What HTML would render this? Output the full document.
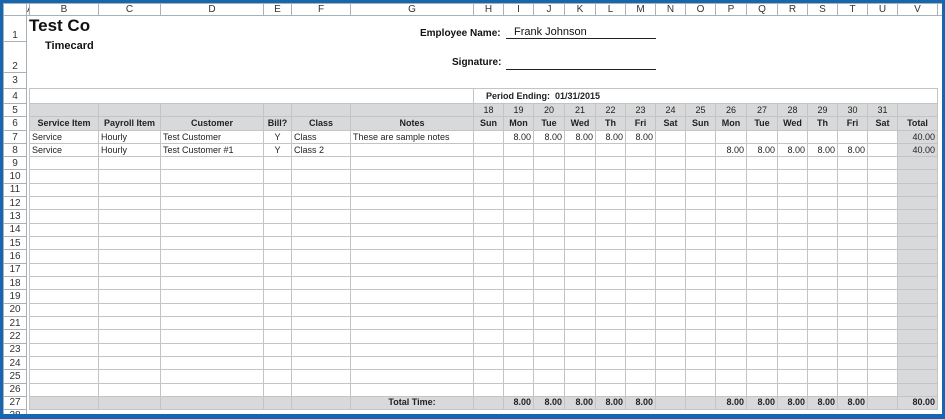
<!DOCTYPE html>
<html><head><style>
html,body{margin:0;padding:0;width:945px;height:419px;overflow:hidden;background:#1767b0;}
#wrap{position:absolute;left:3px;top:3px;width:939px;height:411px;background:#fff;overflow:hidden;}
table{border-collapse:collapse;table-layout:fixed;position:absolute;left:0;top:0;width:939px;}
td,th{padding:0 2px;font-family:"Liberation Sans",sans-serif;font-size:9px;white-space:nowrap;overflow:hidden;color:#222;line-height:11px;}
td{border:1px solid #c4c4c4;}
th{border:1px solid #a8b0b8;background:#fff;font-weight:normal;font-size:10px;color:#333;text-align:center;padding:0;}
tr.top td{border:none;}
.g{background:#d8d9db;}
.b{font-weight:bold;text-align:center;}
.r{text-align:right;}
.c{text-align:center;}
.v{background:#d8d9db;text-align:right;}
.f{border:none;background:#fff;padding:0;}
.ov{position:absolute;font-family:"Liberation Sans",sans-serif;color:#111;white-space:nowrap;}
</style></head><body><div id="wrap">
<table>
<colgroup><col style="width:23px"><col style="width:3px"><col style="width:69px"><col style="width:62px"><col style="width:103px"><col style="width:28px"><col style="width:59px"><col style="width:123px"><col style="width:30px"><col style="width:30px"><col style="width:31px"><col style="width:31px"><col style="width:30px"><col style="width:30px"><col style="width:30px"><col style="width:30px"><col style="width:31px"><col style="width:31px"><col style="width:30px"><col style="width:30px"><col style="width:30px"><col style="width:30px"><col style="width:40px"><col style="width:5px"></colgroup>
<tr style="height:12px"><th></th><th>A</th><th>B</th><th>C</th><th>D</th><th>E</th><th>F</th><th>G</th><th>H</th><th>I</th><th>J</th><th>K</th><th>L</th><th>M</th><th>N</th><th>O</th><th>P</th><th>Q</th><th>R</th><th>S</th><th>T</th><th>U</th><th>V</th><th></th></tr>
<tr class="top" style="height:26px"><th style="vertical-align:bottom">1</th><td colspan="23"></td></tr>
<tr class="top" style="height:31px"><th style="vertical-align:bottom">2</th><td colspan="23"></td></tr>
<tr class="top" style="height:16px"><th>3</th><td colspan="23"></td></tr>
<tr style="height:15px"><th>4</th><td class="f"></td><td colspan="6"></td><td colspan="15" style="font-weight:bold;padding-left:12px">Period Ending:&nbsp; 01/31/2015</td><td class="f"></td></tr>
<tr style="height:13px"><th>5</th><td class="f"></td><td class="g"></td><td class="g"></td><td class="g"></td><td class="g"></td><td class="g"></td><td class="g"></td><td class="g c">18</td><td class="g c">19</td><td class="g c">20</td><td class="g c">21</td><td class="g c">22</td><td class="g c">23</td><td class="g c">24</td><td class="g c">25</td><td class="g c">26</td><td class="g c">27</td><td class="g c">28</td><td class="g c">29</td><td class="g c">30</td><td class="g c">31</td><td class="g"></td><td class="f"></td></tr>
<tr style="height:14px"><th>6</th><td class="f"></td><td class="g b">Service Item</td><td class="g b">Payroll Item</td><td class="g b">Customer</td><td class="g b">Bill?</td><td class="g b">Class</td><td class="g b">Notes</td><td class="g b">Sun</td><td class="g b">Mon</td><td class="g b">Tue</td><td class="g b">Wed</td><td class="g b">Th</td><td class="g b">Fri</td><td class="g b">Sat</td><td class="g b">Sun</td><td class="g b">Mon</td><td class="g b">Tue</td><td class="g b">Wed</td><td class="g b">Th</td><td class="g b">Fri</td><td class="g b">Sat</td><td class="g b">Total</td><td class="f"></td></tr>
<tr style="height:13px"><th>7</th><td class="f"></td><td>Service</td><td>Hourly</td><td>Test Customer</td><td class="c">Y</td><td>Class</td><td>These are sample notes</td><td></td><td class="r">8.00</td><td class="r">8.00</td><td class="r">8.00</td><td class="r">8.00</td><td class="r">8.00</td><td></td><td></td><td></td><td></td><td></td><td></td><td></td><td></td><td class="v">40.00</td><td class="f"></td></tr>
<tr style="height:13px"><th>8</th><td class="f"></td><td>Service</td><td>Hourly</td><td>Test Customer #1</td><td class="c">Y</td><td>Class 2</td><td></td><td></td><td></td><td></td><td></td><td></td><td></td><td></td><td></td><td class="r">8.00</td><td class="r">8.00</td><td class="r">8.00</td><td class="r">8.00</td><td class="r">8.00</td><td></td><td class="v">40.00</td><td class="f"></td></tr>
<tr style="height:13.33px"><th>9</th><td class="f"></td><td></td><td></td><td></td><td></td><td></td><td></td><td></td><td></td><td></td><td></td><td></td><td></td><td></td><td></td><td></td><td></td><td></td><td></td><td></td><td></td><td class="v"></td><td class="f"></td></tr>
<tr style="height:13.33px"><th>10</th><td class="f"></td><td></td><td></td><td></td><td></td><td></td><td></td><td></td><td></td><td></td><td></td><td></td><td></td><td></td><td></td><td></td><td></td><td></td><td></td><td></td><td></td><td class="v"></td><td class="f"></td></tr>
<tr style="height:13.33px"><th>11</th><td class="f"></td><td></td><td></td><td></td><td></td><td></td><td></td><td></td><td></td><td></td><td></td><td></td><td></td><td></td><td></td><td></td><td></td><td></td><td></td><td></td><td></td><td class="v"></td><td class="f"></td></tr>
<tr style="height:13.33px"><th>12</th><td class="f"></td><td></td><td></td><td></td><td></td><td></td><td></td><td></td><td></td><td></td><td></td><td></td><td></td><td></td><td></td><td></td><td></td><td></td><td></td><td></td><td></td><td class="v"></td><td class="f"></td></tr>
<tr style="height:13.33px"><th>13</th><td class="f"></td><td></td><td></td><td></td><td></td><td></td><td></td><td></td><td></td><td></td><td></td><td></td><td></td><td></td><td></td><td></td><td></td><td></td><td></td><td></td><td></td><td class="v"></td><td class="f"></td></tr>
<tr style="height:13.33px"><th>14</th><td class="f"></td><td></td><td></td><td></td><td></td><td></td><td></td><td></td><td></td><td></td><td></td><td></td><td></td><td></td><td></td><td></td><td></td><td></td><td></td><td></td><td></td><td class="v"></td><td class="f"></td></tr>
<tr style="height:13.33px"><th>15</th><td class="f"></td><td></td><td></td><td></td><td></td><td></td><td></td><td></td><td></td><td></td><td></td><td></td><td></td><td></td><td></td><td></td><td></td><td></td><td></td><td></td><td></td><td class="v"></td><td class="f"></td></tr>
<tr style="height:13.33px"><th>16</th><td class="f"></td><td></td><td></td><td></td><td></td><td></td><td></td><td></td><td></td><td></td><td></td><td></td><td></td><td></td><td></td><td></td><td></td><td></td><td></td><td></td><td></td><td class="v"></td><td class="f"></td></tr>
<tr style="height:13.33px"><th>17</th><td class="f"></td><td></td><td></td><td></td><td></td><td></td><td></td><td></td><td></td><td></td><td></td><td></td><td></td><td></td><td></td><td></td><td></td><td></td><td></td><td></td><td></td><td class="v"></td><td class="f"></td></tr>
<tr style="height:13.33px"><th>18</th><td class="f"></td><td></td><td></td><td></td><td></td><td></td><td></td><td></td><td></td><td></td><td></td><td></td><td></td><td></td><td></td><td></td><td></td><td></td><td></td><td></td><td></td><td class="v"></td><td class="f"></td></tr>
<tr style="height:13.33px"><th>19</th><td class="f"></td><td></td><td></td><td></td><td></td><td></td><td></td><td></td><td></td><td></td><td></td><td></td><td></td><td></td><td></td><td></td><td></td><td></td><td></td><td></td><td></td><td class="v"></td><td class="f"></td></tr>
<tr style="height:13.33px"><th>20</th><td class="f"></td><td></td><td></td><td></td><td></td><td></td><td></td><td></td><td></td><td></td><td></td><td></td><td></td><td></td><td></td><td></td><td></td><td></td><td></td><td></td><td></td><td class="v"></td><td class="f"></td></tr>
<tr style="height:13.33px"><th>21</th><td class="f"></td><td></td><td></td><td></td><td></td><td></td><td></td><td></td><td></td><td></td><td></td><td></td><td></td><td></td><td></td><td></td><td></td><td></td><td></td><td></td><td></td><td class="v"></td><td class="f"></td></tr>
<tr style="height:13.33px"><th>22</th><td class="f"></td><td></td><td></td><td></td><td></td><td></td><td></td><td></td><td></td><td></td><td></td><td></td><td></td><td></td><td></td><td></td><td></td><td></td><td></td><td></td><td></td><td class="v"></td><td class="f"></td></tr>
<tr style="height:13.33px"><th>23</th><td class="f"></td><td></td><td></td><td></td><td></td><td></td><td></td><td></td><td></td><td></td><td></td><td></td><td></td><td></td><td></td><td></td><td></td><td></td><td></td><td></td><td></td><td class="v"></td><td class="f"></td></tr>
<tr style="height:13.33px"><th>24</th><td class="f"></td><td></td><td></td><td></td><td></td><td></td><td></td><td></td><td></td><td></td><td></td><td></td><td></td><td></td><td></td><td></td><td></td><td></td><td></td><td></td><td></td><td class="v"></td><td class="f"></td></tr>
<tr style="height:13.33px"><th>25</th><td class="f"></td><td></td><td></td><td></td><td></td><td></td><td></td><td></td><td></td><td></td><td></td><td></td><td></td><td></td><td></td><td></td><td></td><td></td><td></td><td></td><td></td><td class="v"></td><td class="f"></td></tr>
<tr style="height:13.33px"><th>26</th><td class="f"></td><td></td><td></td><td></td><td></td><td></td><td></td><td></td><td></td><td></td><td></td><td></td><td></td><td></td><td></td><td></td><td></td><td></td><td></td><td></td><td></td><td class="v"></td><td class="f"></td></tr>
<tr style="height:13px"><th>27</th><td class="f"></td><td class="g"></td><td class="g"></td><td class="g"></td><td class="g"></td><td class="g"></td><td class="g b">Total Time:</td><td class="g"></td><td class="g r" style="font-weight:bold">8.00</td><td class="g r" style="font-weight:bold">8.00</td><td class="g r" style="font-weight:bold">8.00</td><td class="g r" style="font-weight:bold">8.00</td><td class="g r" style="font-weight:bold">8.00</td><td class="g"></td><td class="g"></td><td class="g r" style="font-weight:bold">8.00</td><td class="g r" style="font-weight:bold">8.00</td><td class="g r" style="font-weight:bold">8.00</td><td class="g r" style="font-weight:bold">8.00</td><td class="g r" style="font-weight:bold">8.00</td><td class="g"></td><td class="v" style="font-weight:bold">80.00</td><td class="f"></td></tr>
<tr style="height:12px"><th>28</th><td class="f" colspan="23"></td></tr>
</table>
<div class="ov" style="left:26px;top:13px;font-size:17px;font-weight:bold;">Test Co</div>
<div class="ov" style="left:42px;top:37px;font-size:11px;font-weight:bold;">Timecard</div>
<div class="ov" style="left:417px;top:25px;font-size:10px;font-weight:bold;">Employee Name:</div>
<div class="ov" style="left:503px;top:23px;width:150px;border-bottom:1px solid #222;font-size:11px;padding-left:8px;box-sizing:border-box;height:13px;line-height:12px;">Frank Johnson</div>
<div class="ov" style="left:449px;top:54px;font-size:10px;font-weight:bold;">Signature:</div>
<div class="ov" style="left:503px;top:55px;width:150px;border-bottom:1px solid #222;height:11px;"></div>
</div></body></html>
